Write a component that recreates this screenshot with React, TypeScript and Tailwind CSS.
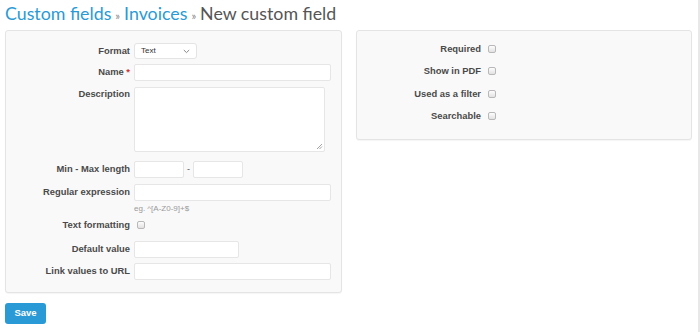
import React from 'react';

const labelFont = { fontFamily: '"Liberation Sans", Arial, sans-serif' };

function Box() {
  // small chrome-like checkbox
  return <span className="inline-block w-[8px] h-[8px] rounded-[2px] border border-[#b8b8b8] bg-gradient-to-b from-[#fdfdfd] to-[#e2e2e2]" />;
}

function Label({ children }: { children: React.ReactNode }) {
  return (
    <div className="w-[124px] shrink-0 text-right text-[9.4px] font-bold text-[#4a4a4a]" style={labelFont}>
      {children}
    </div>
  );
}

function Input({ w }: { w: string }) {
  return <div className={`${w} h-[17px] bg-white border border-[#e6e6e6] rounded-[2px]`} />;
}

function CheckRow({ label }: { label: string }) {
  return (
    <div className="flex items-center h-[22.5px]">
      <Label>{label}</Label>
      <div className="ml-[7px] flex items-center"><Box /></div>
    </div>
  );
}

export default function App() {
  return (
    <div className="w-[700px] h-[332px] bg-white relative overflow-hidden border-r-2 border-[#e8e8e8]" style={labelFont}>
      <h2 className="pl-[5px] pt-[1px] h-[30px] text-[17.8px] leading-[24px] text-[#555]" style={{ fontFamily: 'Lato, "Open Sans", sans-serif' }}>
        <span className="text-[#2a9ad6]">Custom fields</span>
        <span className="text-[11px] text-[#888] mx-[4px]">»</span>
        <span className="text-[#2a9ad6]">Invoices</span>
        <span className="text-[11px] text-[#888] mx-[4px]">»</span>
        New custom field
      </h2>

      <div className="flex pl-[5px] gap-[14px] items-start">
        {/* left panel */}
        <div className="w-[337px] h-[263px] bg-[#f9f9f9] border border-[#e4e4e4] rounded-[3px] shadow-[0_1px_1px_rgba(0,0,0,0.04)] pt-[12px]">
          <div className="flex items-center h-[16px]">
            <Label>Format</Label>
            <div className="ml-[4px] w-[63px] h-[16px] bg-white border border-[#e4e4e4] rounded-[3px] flex items-center justify-between px-[6px] text-[8px] text-[#333]">
              <span>Text</span>
              <svg width="7" height="5" viewBox="0 0 7 5" fill="none"><path d="M0.8 1l2.7 2.6L6.2 1" stroke="#888" strokeWidth="1" /></svg>
            </div>
          </div>

          <div className="flex items-center mt-[5px]">
            <Label>Name <span className="text-[#c33]">*</span></Label>
            <div className="ml-[4px]"><Input w="w-[197px]" /></div>
          </div>

          <div className="flex items-start mt-[6px]">
            <div className="pt-0"><Label>Description</Label></div>
            <div className="ml-[4px] relative w-[191px] h-[65px] bg-white border border-[#e6e6e6] rounded-[2px]">
              <svg className="absolute right-[1px] bottom-[1px]" width="7" height="7" viewBox="0 0 7 7"><path d="M6 1L1 6M6 3.5L3.5 6" stroke="#999" strokeWidth="0.9" /></svg>
            </div>
          </div>

          <div className="flex items-center mt-[9px]">
            <Label>Min - Max length</Label>
            <div className="ml-[4px] flex items-center">
              <Input w="w-[50px]" />
              <span className="mx-[3px] text-[9px] text-[#555]">-</span>
              <Input w="w-[50px]" />
            </div>
          </div>

          <div className="flex items-center mt-[6px]">
            <Label>Regular expression</Label>
            <div className="ml-[4px]"><Input w="w-[197px]" /></div>
          </div>
          <div className="pl-[128px] h-[14px] text-[8px] leading-[14px] text-[#999] pt-[1px]">eg. ^[A-Z0-9]+$</div>

          <div className="flex items-center h-[20px]">
            <Label>Text formatting</Label>
            <div className="ml-[7px] flex items-center"><Box /></div>
          </div>

          <div className="flex items-center mt-[6px]">
            <Label>Default value</Label>
            <div className="ml-[4px]"><Input w="w-[105px]" /></div>
          </div>

          <div className="flex items-center mt-[5px]">
            <Label>Link values to URL</Label>
            <div className="ml-[4px]"><Input w="w-[197px]" /></div>
          </div>
        </div>

        {/* right panel */}
        <div className="w-[336px] h-[110px] bg-[#f9f9f9] border border-[#e4e4e4] rounded-[3px] shadow-[0_1px_1px_rgba(0,0,0,0.04)] pt-[6.5px]">
          <CheckRow label="Required" />
          <CheckRow label="Show in PDF" />
          <CheckRow label="Used as a filter" />
          <CheckRow label="Searchable" />
        </div>
      </div>

      <div className="pl-[5px] mt-[6px]">
        <button className="w-[41px] h-[21px] rounded-[3px] bg-[#2a9ad6] text-white text-[9.5px] font-bold" style={labelFont}>Save</button>
      </div>
    </div>
  );
}
